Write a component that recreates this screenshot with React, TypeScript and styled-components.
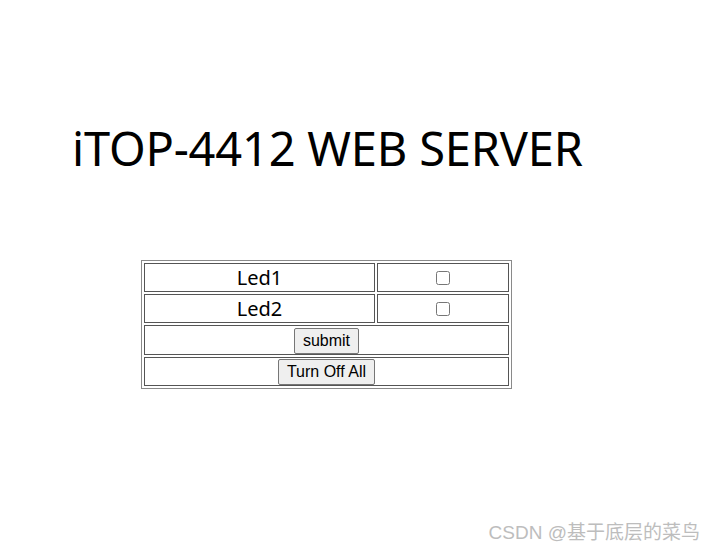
import React from 'react';
import styled, { createGlobalStyle } from 'styled-components';

const GlobalStyle = createGlobalStyle`
  html, body {
    margin: 0;
    padding: 0;
    background: #ffffff;
  }
  body {
    font-family: "Noto Sans", "Noto Sans CJK SC", sans-serif;
    color: #000000;
  }
`;

const Page = styled.div`
  position: relative;
  width: 715px;
  height: 551px;
  overflow: hidden;
`;

const Heading = styled.h1`
  margin: 0;
  padding: 116px 0 0 72px;
  font-family: "Noto Sans", sans-serif;
  font-weight: 400;
  font-size: 47px;
  line-height: 64px;
  letter-spacing: -0.2px;
`;

const Panel = styled.div`
  padding: 80px 0 0 141px;
`;

const LedTable = styled.table`
  border: 1px solid #8a8a8a;
  border-collapse: separate;
  border-spacing: 2px;
  width: 371px;
`;

const Cell = styled.td<{ $wide?: boolean }>`
  border: 1px solid #555555;
  height: 27px;
  padding: 0;
  text-align: center;
  vertical-align: middle;
  font-family: "Noto Sans", sans-serif;
  font-size: 20px;
  line-height: 26px;
  width: ${({ $wide }) => ($wide ? '229px' : 'auto')};
`;

const Check = styled.input`
  width: 14px;
  height: 14px;
  margin: 2px 0 0 0;
`;

const Button = styled.button`
  font-family: "Liberation Sans", Arial, sans-serif;
  font-size: 16px;
  height: 26px;
  padding: 0 8px;
  margin: 0;
  background: #efefef;
  border: 1px solid #767676;
  border-radius: 2px;
  color: #000000;
  vertical-align: middle;
`;

const Watermark = styled.div`
  position: absolute;
  right: 15px;
  bottom: 7px;
  font-family: "Liberation Sans", "Noto Sans CJK SC", sans-serif;
  font-size: 19px;
  color: #bdbdbd;
`;

const leds = ['Led1', 'Led2'];

export default function App() {
  return (
    <Page>
      <GlobalStyle />
      <Heading>iTOP-4412 WEB SERVER</Heading>
      <Panel>
        <LedTable>
          <tbody>
            {leds.map((led) => (
              <tr key={led}>
                <Cell $wide>{led}</Cell>
                <Cell>
                  <Check type="checkbox" />
                </Cell>
              </tr>
            ))}
            <tr>
              <Cell colSpan={2}>
                <Button>submit</Button>
              </Cell>
            </tr>
            <tr>
              <Cell colSpan={2}>
                <Button>Turn Off All</Button>
              </Cell>
            </tr>
          </tbody>
        </LedTable>
      </Panel>
      <Watermark>CSDN @基于底层的菜鸟</Watermark>
    </Page>
  );
}
